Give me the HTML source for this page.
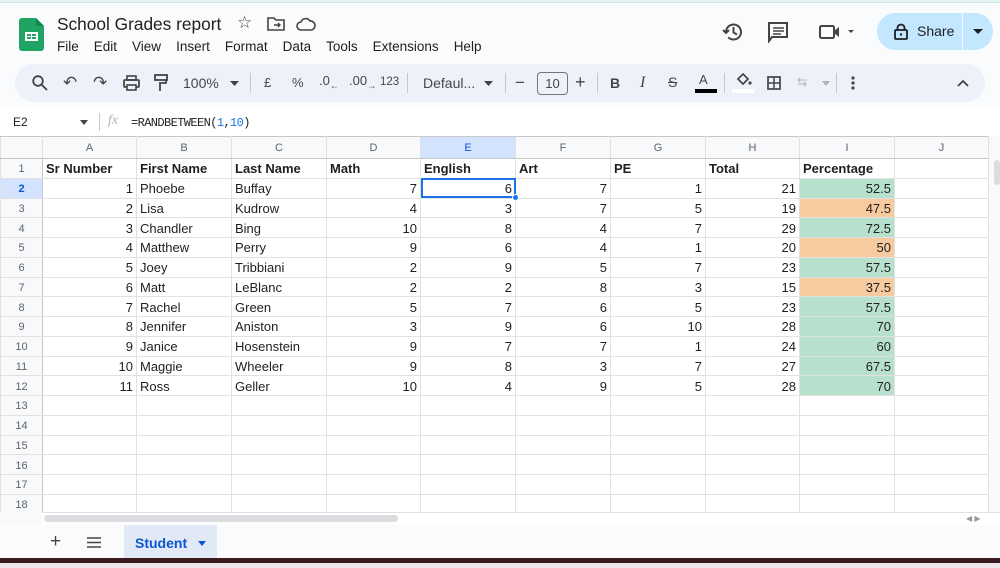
<!DOCTYPE html>
<html><head><meta charset="utf-8"><style>
*{box-sizing:border-box;margin:0;padding:0}
body{width:1000px;height:568px;overflow:hidden;background:#f9fbfd;font-family:"Liberation Sans",Arial,sans-serif;position:relative;color:#1f1f1f}
.a{position:absolute}
.menu span{margin-right:15px}
.tb{font-size:14px;color:#444746}
table{border-collapse:collapse;table-layout:fixed;position:absolute;left:0;top:136px;background:#fff}
td{border:1px solid #e1e1e1;font-size:13px;height:19.75px;padding:2px 3px 0 3px;white-space:nowrap;overflow:hidden;line-height:16px}
tr.h td{height:22px;background:#f8f9fa;color:#5f6368;text-align:center;font-size:11px;border-color:#c7c7c7 #e1e1e1 #c7c7c7 #e1e1e1;padding-top:0}
td.rh{background:#f8f9fa;color:#5f6368;text-align:center;font-size:11px;border-right-color:#c7c7c7}
td.n{text-align:right}
td.b{font-weight:bold}
.g{background:#b7e1cd}.o{background:#f7cb9f}
</style></head><body>
<div class="a" style="left:0;top:0;width:1000px;height:3px;background:#e6f4f1;border-bottom:1px solid #cde8e2"></div>
<svg class="a" style="left:19px;top:18px" width="25" height="33" viewBox="0 0 25 33"><path d="M3 0H17L25 8V30a3 3 0 0 1-3 3H3a3 3 0 0 1-3-3V3a3 3 0 0 1 3-3z" fill="#1fa463"/><path d="M17 0V8H25z" fill="#0f8a4f"/><rect x="6" y="14" width="13" height="9" fill="#fff"/><path d="M8 16h4v2H8zM13 16h4v2h-4zM8 19h4v2H8zM13 19h4v2h-4z" fill="#1fa463"/></svg>
<div class="a" style="left:57px;top:14px;font-size:17.3px;color:#1f1f1f">School Grades report</div>
<div class="a" style="left:237px;top:13px;font-size:17px;color:#444">☆</div>
<svg class="a" style="left:267px;top:17px" width="18" height="14"><path d="M1 1h6l2 2h8v10H1z" fill="none" stroke="#444" stroke-width="1.6"/><path d="M7 8h6M11 6l2 2-2 2" stroke="#444" stroke-width="1.4" fill="none"/></svg>
<svg class="a" style="left:296px;top:17px" width="20" height="14"><path d="M5 13a4 4 0 0 1 0-8 5 5 0 0 1 9-1 4.5 4.5 0 0 1 1 9z" fill="none" stroke="#444" stroke-width="1.6"/></svg>
<div class="a menu" style="left:57px;top:39px;font-size:13.5px;color:#1f1f1f"><span>File</span><span>Edit</span><span>View</span><span>Insert</span><span>Format</span><span>Data</span><span>Tools</span><span>Extensions</span><span>Help</span></div>
<svg class="a" style="left:722px;top:21px" width="22" height="22" viewBox="0 0 22 22"><path d="M4 11a7.5 7.5 0 1 1 2.2 5.3" fill="none" stroke="#444" stroke-width="2"/><path d="M1 9l3 3 3-3" fill="none" stroke="#444" stroke-width="2"/><path d="M11.5 6v5.5l3.5 2" fill="none" stroke="#444" stroke-width="2"/></svg>
<svg class="a" style="left:768px;top:22px" width="21" height="21"><path d="M1 1h18v14H4l-3 4z" fill="none" stroke="#444" stroke-width="2"/><path d="M5 6h11M5 9h11M5 12h8" stroke="#444" stroke-width="1.6"/></svg>
<svg class="a" style="left:819px;top:24px" width="36" height="16"><rect x="1" y="2" width="14" height="12" rx="1.5" fill="none" stroke="#444" stroke-width="2"/><path d="M15 7l5-4v10l-5-4z" fill="#444"/><path d="M29 6l3 3 3-3z" fill="#444"/></svg>
<div class="a" style="left:877px;top:13px;width:116px;height:37px;border-radius:19px;background:#c2e7ff"></div>
<div class="a" style="left:962px;top:13px;width:1px;height:37px;background:#f0f8ff"></div>
<svg class="a" style="left:894px;top:23px" width="14" height="17"><rect x="1" y="7" width="12" height="9" rx="1" fill="none" stroke="#1f1f1f" stroke-width="1.8"/><path d="M3.5 7V5a3.5 3.5 0 0 1 7 0v2" fill="none" stroke="#1f1f1f" stroke-width="1.8"/><circle cx="7" cy="11.5" r="1.2" fill="#1f1f1f"/></svg>
<div class="a" style="left:917px;top:23px;font-size:14px;color:#1f1f1f;font-weight:500">Share</div>
<svg class="a" style="left:973px;top:29px" width="10" height="6"><path d="M0 0h10L5 5z" fill="#1f1f1f"/></svg>
<div class="a" style="left:15px;top:64px;width:970px;height:38px;border-radius:19px;background:#edf2fa"></div>
<svg class="a" style="left:32px;top:75px" width="16" height="16"><circle cx="6" cy="6" r="4.8" fill="none" stroke="#444" stroke-width="1.8"/><path d="M9.5 9.5L15 15" stroke="#444" stroke-width="1.9"/></svg>
<div class="a tb" style="left:63px;top:73px;font-size:17px">↶</div>
<div class="a tb" style="left:93px;top:73px;font-size:17px">↷</div>
<svg class="a" style="left:123px;top:75px" width="17" height="16"><rect x="1" y="5" width="15" height="7" rx="1" fill="none" stroke="#444" stroke-width="1.8"/><rect x="4" y="1" width="9" height="4" fill="none" stroke="#444" stroke-width="1.6"/><rect x="4" y="10" width="9" height="5" fill="#edf2fa" stroke="#444" stroke-width="1.6"/></svg>
<svg class="a" style="left:154px;top:74px" width="14" height="18"><rect x="1" y="1" width="12" height="5" fill="none" stroke="#444" stroke-width="1.8"/><path d="M12 6v3H6v8" fill="none" stroke="#444" stroke-width="1.8"/></svg>
<div class="a tb" style="left:183px;top:75px">100%</div>
<svg class="a" style="left:230px;top:81px" width="9" height="5"><path d="M0 0h9L4.5 5z" fill="#444"/></svg>
<div class="a" style="left:250px;top:73px;width:1px;height:20px;background:#c7c7c7"></div>
<div class="a tb" style="left:264px;top:75px;font-size:13px">£</div>
<div class="a tb" style="left:292px;top:75px;font-size:13px">%</div>
<div class="a tb" style="left:319px;top:73px;font-size:13px">.0<sub style="font-size:9px">←</sub></div>
<div class="a tb" style="left:349px;top:73px;font-size:13px">.00<sub style="font-size:9px">→</sub></div>
<div class="a tb" style="left:380px;top:76px;font-size:11.5px">123</div>
<div class="a" style="left:407px;top:73px;width:1px;height:20px;background:#c7c7c7"></div>
<div class="a tb" style="left:423px;top:75px">Defaul...</div>
<svg class="a" style="left:484px;top:81px" width="9" height="5"><path d="M0 0h9L4.5 5z" fill="#444"/></svg>
<div class="a" style="left:505px;top:73px;width:1px;height:20px;background:#c7c7c7"></div>
<div class="a tb" style="left:515px;top:73px;font-size:17px">−</div>
<div class="a" style="left:537px;top:72px;width:31px;height:23px;border:1px solid #747775;border-radius:4px;background:#edf2fa;font-size:13px;text-align:center;line-height:21px;color:#444">10</div>
<div class="a tb" style="left:575px;top:72px;font-size:18px">+</div>
<div class="a" style="left:597px;top:73px;width:1px;height:20px;background:#c7c7c7"></div>
<div class="a tb" style="left:610px;top:75px;font-weight:bold">B</div>
<div class="a tb" style="left:640px;top:74px;font-style:italic;font-family:'Liberation Serif',serif;font-size:16px">I</div>
<div class="a tb" style="left:668px;top:74px;text-decoration:line-through">S</div>
<div class="a tb" style="left:699px;top:72px;font-size:13px">A</div>
<div class="a" style="left:695px;top:89px;width:22px;height:4px;background:#000"></div>
<div class="a" style="left:724px;top:73px;width:1px;height:20px;background:#c7c7c7"></div>
<svg class="a" style="left:735px;top:73px" width="18" height="14"><path d="M3 6l5-5 5 5-5 5z" fill="none" stroke="#444" stroke-width="1.7"/><circle cx="15" cy="10" r="1.6" fill="#444"/></svg>
<div class="a" style="left:732px;top:89px;width:22px;height:4px;background:#fff"></div>
<svg class="a" style="left:767px;top:76px" width="14" height="14"><rect x="1" y="1" width="12" height="12" fill="none" stroke="#444" stroke-width="1.7"/><path d="M7 1v12M1 7h12" stroke="#444" stroke-width="1.5"/></svg>
<div class="a" style="left:797px;top:75px;font-size:12px;color:#b0b3b8">⇆</div>
<svg class="a" style="left:822px;top:81px" width="8" height="5"><path d="M0 0h8L4 5z" fill="#b0b3b8"/></svg>
<div class="a" style="left:836px;top:73px;width:1px;height:20px;background:#c7c7c7"></div>
<svg class="a" style="left:851px;top:76px" width="4" height="14"><circle cx="2" cy="2" r="1.6" fill="#444"/><circle cx="2" cy="7" r="1.6" fill="#444"/><circle cx="2" cy="12" r="1.6" fill="#444"/></svg>
<svg class="a" style="left:957px;top:79px" width="12" height="8"><path d="M1 7l5-5 5 5" fill="none" stroke="#444" stroke-width="1.8"/></svg>
<div class="a" style="left:0;top:108px;width:1000px;height:28px;background:#fff"></div>
<div class="a" style="left:13px;top:115px;font-size:12px;color:#1f1f1f">E2</div>
<svg class="a" style="left:80px;top:120px" width="8" height="5"><path d="M0 0h8L4 5z" fill="#444"/></svg>
<div class="a" style="left:99px;top:113px;width:1px;height:18px;background:#c7c7c7"></div>
<div class="a" style="left:108px;top:113px;font-size:14px;color:#b0b3b8;font-style:italic;font-family:'Liberation Serif',serif">fx</div>
<div class="a" style="left:131px;top:116px;font-size:12px;font-family:'Liberation Mono',monospace;color:#1f1f1f;letter-spacing:-0.6px">=RANDBETWEEN(<span style="color:#1a73e8">1</span>,<span style="color:#1a73e8">10</span>)</div>
<table>
<colgroup><col style="width:42px"><col style="width:94px"><col style="width:95px"><col style="width:95px"><col style="width:94px"><col style="width:95px"><col style="width:95px"><col style="width:95px"><col style="width:94px"><col style="width:95px"><col style="width:94px"></colgroup>
<tr class="h"><td></td><td>A</td><td>B</td><td>C</td><td>D</td><td style="background:#d3e3fd;color:#0b57d0">E</td><td>F</td><td>G</td><td>H</td><td>I</td><td>J</td></tr>
<tr><td class="rh">1</td><td class="b">Sr Number</td><td class="b">First Name</td><td class="b">Last Name</td><td class="b">Math</td><td class="b">English</td><td class="b">Art</td><td class="b">PE</td><td class="b">Total</td><td class="b">Percentage</td><td></td></tr>
<tr><td class="rh" style="background:#d3e3fd;color:#0b57d0;font-weight:bold">2</td><td class="n">1</td><td>Phoebe</td><td>Buffay</td><td class="n">7</td><td class="n" style="outline:2px solid #1a73e8;outline-offset:-2px">6</td><td class="n">7</td><td class="n">1</td><td class="n">21</td><td class="n g">52.5</td><td></td></tr>
<tr><td class="rh">3</td><td class="n">2</td><td>Lisa</td><td>Kudrow</td><td class="n">4</td><td class="n">3</td><td class="n">7</td><td class="n">5</td><td class="n">19</td><td class="n o">47.5</td><td></td></tr>
<tr><td class="rh">4</td><td class="n">3</td><td>Chandler</td><td>Bing</td><td class="n">10</td><td class="n">8</td><td class="n">4</td><td class="n">7</td><td class="n">29</td><td class="n g">72.5</td><td></td></tr>
<tr><td class="rh">5</td><td class="n">4</td><td>Matthew</td><td>Perry</td><td class="n">9</td><td class="n">6</td><td class="n">4</td><td class="n">1</td><td class="n">20</td><td class="n o">50</td><td></td></tr>
<tr><td class="rh">6</td><td class="n">5</td><td>Joey</td><td>Tribbiani</td><td class="n">2</td><td class="n">9</td><td class="n">5</td><td class="n">7</td><td class="n">23</td><td class="n g">57.5</td><td></td></tr>
<tr><td class="rh">7</td><td class="n">6</td><td>Matt</td><td>LeBlanc</td><td class="n">2</td><td class="n">2</td><td class="n">8</td><td class="n">3</td><td class="n">15</td><td class="n o">37.5</td><td></td></tr>
<tr><td class="rh">8</td><td class="n">7</td><td>Rachel</td><td>Green</td><td class="n">5</td><td class="n">7</td><td class="n">6</td><td class="n">5</td><td class="n">23</td><td class="n g">57.5</td><td></td></tr>
<tr><td class="rh">9</td><td class="n">8</td><td>Jennifer</td><td>Aniston</td><td class="n">3</td><td class="n">9</td><td class="n">6</td><td class="n">10</td><td class="n">28</td><td class="n g">70</td><td></td></tr>
<tr><td class="rh">10</td><td class="n">9</td><td>Janice</td><td>Hosenstein</td><td class="n">9</td><td class="n">7</td><td class="n">7</td><td class="n">1</td><td class="n">24</td><td class="n g">60</td><td></td></tr>
<tr><td class="rh">11</td><td class="n">10</td><td>Maggie</td><td>Wheeler</td><td class="n">9</td><td class="n">8</td><td class="n">3</td><td class="n">7</td><td class="n">27</td><td class="n g">67.5</td><td></td></tr>
<tr><td class="rh">12</td><td class="n">11</td><td>Ross</td><td>Geller</td><td class="n">10</td><td class="n">4</td><td class="n">9</td><td class="n">5</td><td class="n">28</td><td class="n g">70</td><td></td></tr>
<tr><td class="rh">13</td><td></td><td></td><td></td><td></td><td></td><td></td><td></td><td></td><td></td><td></td></tr>
<tr><td class="rh">14</td><td></td><td></td><td></td><td></td><td></td><td></td><td></td><td></td><td></td><td></td></tr>
<tr><td class="rh">15</td><td></td><td></td><td></td><td></td><td></td><td></td><td></td><td></td><td></td><td></td></tr>
<tr><td class="rh">16</td><td></td><td></td><td></td><td></td><td></td><td></td><td></td><td></td><td></td><td></td></tr>
<tr><td class="rh">17</td><td></td><td></td><td></td><td></td><td></td><td></td><td></td><td></td><td></td><td></td></tr>
<tr><td class="rh">18</td><td></td><td></td><td></td><td></td><td></td><td></td><td></td><td></td><td></td><td></td></tr>
</table>
<div class="a" style="left:512px;top:194px;width:7px;height:7px;border-radius:50%;background:#1a73e8;border:1px solid #fff"></div>
<div class="a" style="left:988px;top:136px;width:12px;height:376px;background:#f8f9fa;border-left:1px solid #e1e1e1"></div>
<div class="a" style="left:994px;top:160px;width:6px;height:25px;border-radius:3px;background:#dadce0"></div>
<div class="a" style="left:0;top:512px;width:1000px;height:13px;background:#fff;border-top:1px solid #e1e1e1"></div>
<div class="a" style="left:0;top:512px;width:42px;height:13px;background:#f8f9fa"></div>
<div class="a" style="left:44px;top:515px;width:354px;height:7px;border-radius:4px;background:#dadce0"></div>
<div class="a" style="left:966px;top:514px;font-size:8px;color:#999">◀ ▶</div>
<div class="a" style="left:0;top:525px;width:1000px;height:33px;background:#f9fbfd"></div>
<div class="a" style="left:50px;top:531px;font-size:19px;color:#444">+</div>
<svg class="a" style="left:87px;top:537px" width="14" height="11"><path d="M0 1h14M0 5.5h14M0 10h14" stroke="#444" stroke-width="1.6"/></svg>
<div class="a" style="left:124px;top:525px;width:93px;height:33px;background:#e1e9f7"></div>
<div class="a" style="left:135px;top:535px;font-size:14px;font-weight:bold;color:#0b57d0">Student</div>
<svg class="a" style="left:198px;top:541px" width="8" height="5"><path d="M0 0h8L4 5z" fill="#0b57d0"/></svg>
<div class="a" style="left:0;top:558px;width:1000px;height:5px;background:#3a1a1e"></div>
<div class="a" style="left:0;top:563px;width:1000px;height:5px;background:#efe3ec"></div>
</body></html>
